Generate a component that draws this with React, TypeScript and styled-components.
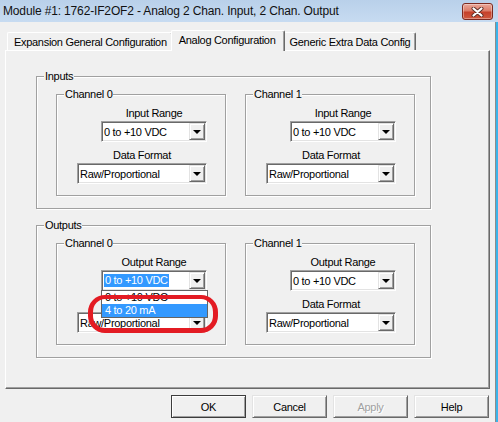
import React from 'react';
import styled, { createGlobalStyle } from 'styled-components';

const GlobalStyle = createGlobalStyle`
  html, body {
    margin: 0;
    padding: 0;
    background: #f0f0f0;
  }
  body {
    font-family: "Liberation Sans", Arial, sans-serif;
    font-size: 11px;
    letter-spacing: -0.3px;
    color: #000;
  }
  * {
    box-sizing: border-box;
  }
`;

const Window = styled.div`
  position: relative;
  width: 498px;
  height: 422px;
  display: flex;
  flex-direction: column;
  overflow: hidden;
  background: #f0f0f0;
`;

const TitleBar = styled.div`
  height: 22px;
  flex-shrink: 0;
  display: flex;
  align-items: flex-start;
  justify-content: space-between;
  padding: 0 5px 0 3px;
  background: linear-gradient(#b9d0ea, #c7dbf1);
`;

const Title = styled.div`
  font-size: 12px;
  letter-spacing: -0.15px;
  line-height: 23px;
  color: #111;
  white-space: nowrap;
`;

const CloseButton = styled.div`
  margin-top: 3px;
  width: 31px;
  height: 17px;
  border: 1px solid #7d2a20;
  border-radius: 3px;
  background: linear-gradient(#eaa899 0%, #dc7c68 45%, #c5412b 55%, #d0593f 100%);
  box-shadow: inset 0 0 0 1px rgba(255, 255, 255, 0.35);
  display: flex;
  align-items: center;
  justify-content: center;
`;

const Body = styled.div`
  flex: 1;
  display: flex;
  flex-direction: column;
  padding: 8px 6px 0 5px;
  border-right: 2px solid #3ab4ea;
  box-shadow: inset -1px 0 0 #8c8c8c;
`;

const TabStrip = styled.div`
  height: 20px;
  flex-shrink: 0;
  display: flex;
  align-items: flex-end;
  padding-left: 2px;
`;

const Tab = styled.div<{ $active?: boolean }>`
  position: relative;
  z-index: ${(p) => (p.$active ? 2 : 1)};
  height: ${(p) => (p.$active ? 21 : 18)}px;
  margin: 0 ${(p) => (p.$active ? -2 : 0)}px ${(p) => (p.$active ? -1 : 0)}px;
  padding: ${(p) => (p.$active ? '0 8px 2px 7px' : '1px 5px 0 6px')};
  display: flex;
  align-items: center;
  white-space: nowrap;
  background: #f0f0f0;
  border-top: 1px solid #fff;
  border-left: 1px solid #fff;
  border-right: 1px solid #696969;
  border-radius: 2px 2px 0 0;
  box-shadow: inset -1px 0 0 #a0a0a0;
`;

const Panel = styled.div`
  flex: 1;
  display: flex;
  flex-direction: column;
  align-items: flex-start;
  gap: 16px;
  padding: 25px 0 0 30px;
  border-top: 1px solid #fff;
  border-left: 1px solid #fff;
  border-right: 1px solid #696969;
  border-bottom: 1px solid #696969;
  box-shadow: inset -1px -1px 0 #a0a0a0;
`;

const GroupBox = styled.div<{ $width?: number; $padBottom: number }>`
  display: flex;
  flex-direction: column;
  width: ${(p) => (p.$width ? `${p.$width}px` : 'auto')};
  padding-bottom: ${(p) => p.$padBottom}px;
  border: 1px solid #a0a0a0;
  box-shadow: 1px 1px 0 #fff, inset 1px 1px 0 #fff;
`;

const Legend = styled.div`
  align-self: flex-start;
  margin: -7px 0 0 7px;
  padding: 0 1px;
  line-height: 13px;
  background: #f0f0f0;
`;

const ChannelRow = styled.div`
  display: flex;
  gap: 19px;
  padding: 11px 15px 0 19px;
`;

const Fields = styled.div`
  display: flex;
  flex-direction: column;
  align-items: flex-end;
  gap: 7px;
  margin-top: 6px;
  padding-right: 18px;
`;

const Field = styled.div`
  display: flex;
  flex-direction: column;
  align-items: center;
`;

const FieldLabel = styled.div`
  line-height: 13px;
  margin-bottom: 1px;
`;

const Select = styled.div<{ $width: number }>`
  position: relative;
  width: ${(p) => p.$width}px;
  height: 21px;
  display: flex;
  padding: 1px;
  background: #fff;
  border: 1px solid;
  border-color: #a0a0a0 #fff #fff #a0a0a0;
  box-shadow: inset 1px 1px 0 #696969, inset -1px -1px 0 #e3e3e3;
`;

const SelectValue = styled.div`
  flex: 1;
  display: flex;
  align-items: center;
  padding-left: 1px;
  white-space: nowrap;
  overflow: hidden;
`;

const Highlight = styled.span`
  display: inline-block;
  height: 13px;
  line-height: 13px;
  padding: 0 1px;
  background: #3399ff;
  color: #fff;
`;

const ArrowButton = styled.div`
  width: 16px;
  display: flex;
  align-items: center;
  justify-content: center;
  background: #f0f0f0;
  border: 1px solid;
  border-color: #e3e3e3 #696969 #696969 #e3e3e3;
  box-shadow: inset 1px 1px 0 #fff, inset -1px -1px 0 #a0a0a0;

  &::after {
    content: '';
    border-left: 4px solid transparent;
    border-right: 4px solid transparent;
    border-top: 4px solid #000;
    margin-top: 1px;
  }
`;

const DropList = styled.div`
  position: absolute;
  z-index: 10;
  top: 100%;
  left: -1px;
  width: calc(100% + 3px);
  border: 1px solid #646464;
  background: #fff;
`;

const DropItem = styled.div<{ $selected?: boolean }>`
  height: 13px;
  line-height: 13px;
  padding-left: 3px;
  white-space: nowrap;
  background: ${(p) => (p.$selected ? '#3399ff' : '#fff')};
  color: ${(p) => (p.$selected ? '#fff' : '#000')};
`;

const Annotation = styled.div`
  position: absolute;
  z-index: 20;
  left: 88px;
  top: 295px;
  width: 130px;
  height: 38px;
  border: 5px solid #e31b23;
  border-top-width: 4px;
  border-radius: 17px;
  pointer-events: none;
`;

const ButtonRow = styled.div`
  flex-shrink: 0;
  display: flex;
  justify-content: flex-end;
  gap: 6px;
  height: 23px;
  margin: 6px 1px 4px 0;
`;

const DialogButton = styled.div<{ $default?: boolean; $disabled?: boolean }>`
  width: 75px;
  height: 23px;
  display: flex;
  align-items: center;
  justify-content: center;
  background: #f0f0f0;
  color: ${(p) => (p.$disabled ? '#a0a0a0' : '#000')};
  text-shadow: ${(p) => (p.$disabled ? '1px 1px 0 #fff' : 'none')};
  border: 1px solid;
  border-color: ${(p) => (p.$default ? '#3c3c3c' : '#e3e3e3 #696969 #696969 #e3e3e3')};
  box-shadow: ${(p) =>
    p.$default
      ? 'inset 1px 1px 0 #fff, inset -1px -1px 0 #a0a0a0'
      : 'inset 1px 1px 0 #fff, inset -1px -1px 0 #a0a0a0'};
`;

const RANGE = '0 to +10 VDC';
const FORMAT = 'Raw/Proportional';

type ChannelProps = {
  name: string;
  rangeLabel: string;
  open?: boolean;
};

const Channel = ({ name, rangeLabel, open }: ChannelProps) => (
  <GroupBox $width={170} $padBottom={11}>
    <Legend>{name}</Legend>
    <Fields>
      <Field>
        <FieldLabel>{rangeLabel}</FieldLabel>
        <Select $width={106}>
          <SelectValue>{open ? <Highlight>{RANGE}</Highlight> : RANGE}</SelectValue>
          <ArrowButton />
          {open && (
            <DropList>
              <DropItem>0 to +10 VDC</DropItem>
              <DropItem $selected>4 to 20 mA</DropItem>
            </DropList>
          )}
        </Select>
      </Field>
      <Field>
        <FieldLabel>Data Format</FieldLabel>
        <Select $width={130}>
          <SelectValue>{FORMAT}</SelectValue>
          <ArrowButton />
        </Select>
      </Field>
    </Fields>
  </GroupBox>
);

const CloseGlyph = () => (
  <svg width="13" height="10" viewBox="0 0 13 10">
    <path d="M2.5 1.5 L10.5 8.5 M10.5 1.5 L2.5 8.5" stroke="#5b2e26" strokeWidth="4" strokeLinecap="round" />
    <path d="M2.5 1.5 L10.5 8.5 M10.5 1.5 L2.5 8.5" stroke="#fff" strokeWidth="2.2" strokeLinecap="round" />
  </svg>
);

const App = () => {
  return (
    <Window>
      <GlobalStyle />
      <TitleBar>
        <Title>Module #1: 1762-IF2OF2 - Analog 2 Chan. Input, 2 Chan. Output</Title>
        <CloseButton>
          <CloseGlyph />
        </CloseButton>
      </TitleBar>
      <Body>
        <TabStrip>
          <Tab>Expansion General Configuration</Tab>
          <Tab $active>Analog Configuration</Tab>
          <Tab>Generic Extra Data Config</Tab>
        </TabStrip>
        <Panel>
          {/* Inputs */}
          <GroupBox $padBottom={12}>
            <Legend>Inputs</Legend>
            <ChannelRow>
              <Channel name="Channel 0" rangeLabel="Input Range" />
              <Channel name="Channel 1" rangeLabel="Input Range" />
            </ChannelRow>
          </GroupBox>

          {/* Outputs */}
          <GroupBox $padBottom={12}>
            <Legend>Outputs</Legend>
            <ChannelRow>
              <Channel name="Channel 0" rangeLabel="Output Range" open />
              <Channel name="Channel 1" rangeLabel="Output Range" />
            </ChannelRow>
          </GroupBox>
        </Panel>
        <ButtonRow>
          <DialogButton $default>OK</DialogButton>
          <DialogButton>Cancel</DialogButton>
          <DialogButton $disabled>Apply</DialogButton>
          <DialogButton>Help</DialogButton>
        </ButtonRow>
      </Body>
      <Annotation />
    </Window>
  );
};

export default App;
